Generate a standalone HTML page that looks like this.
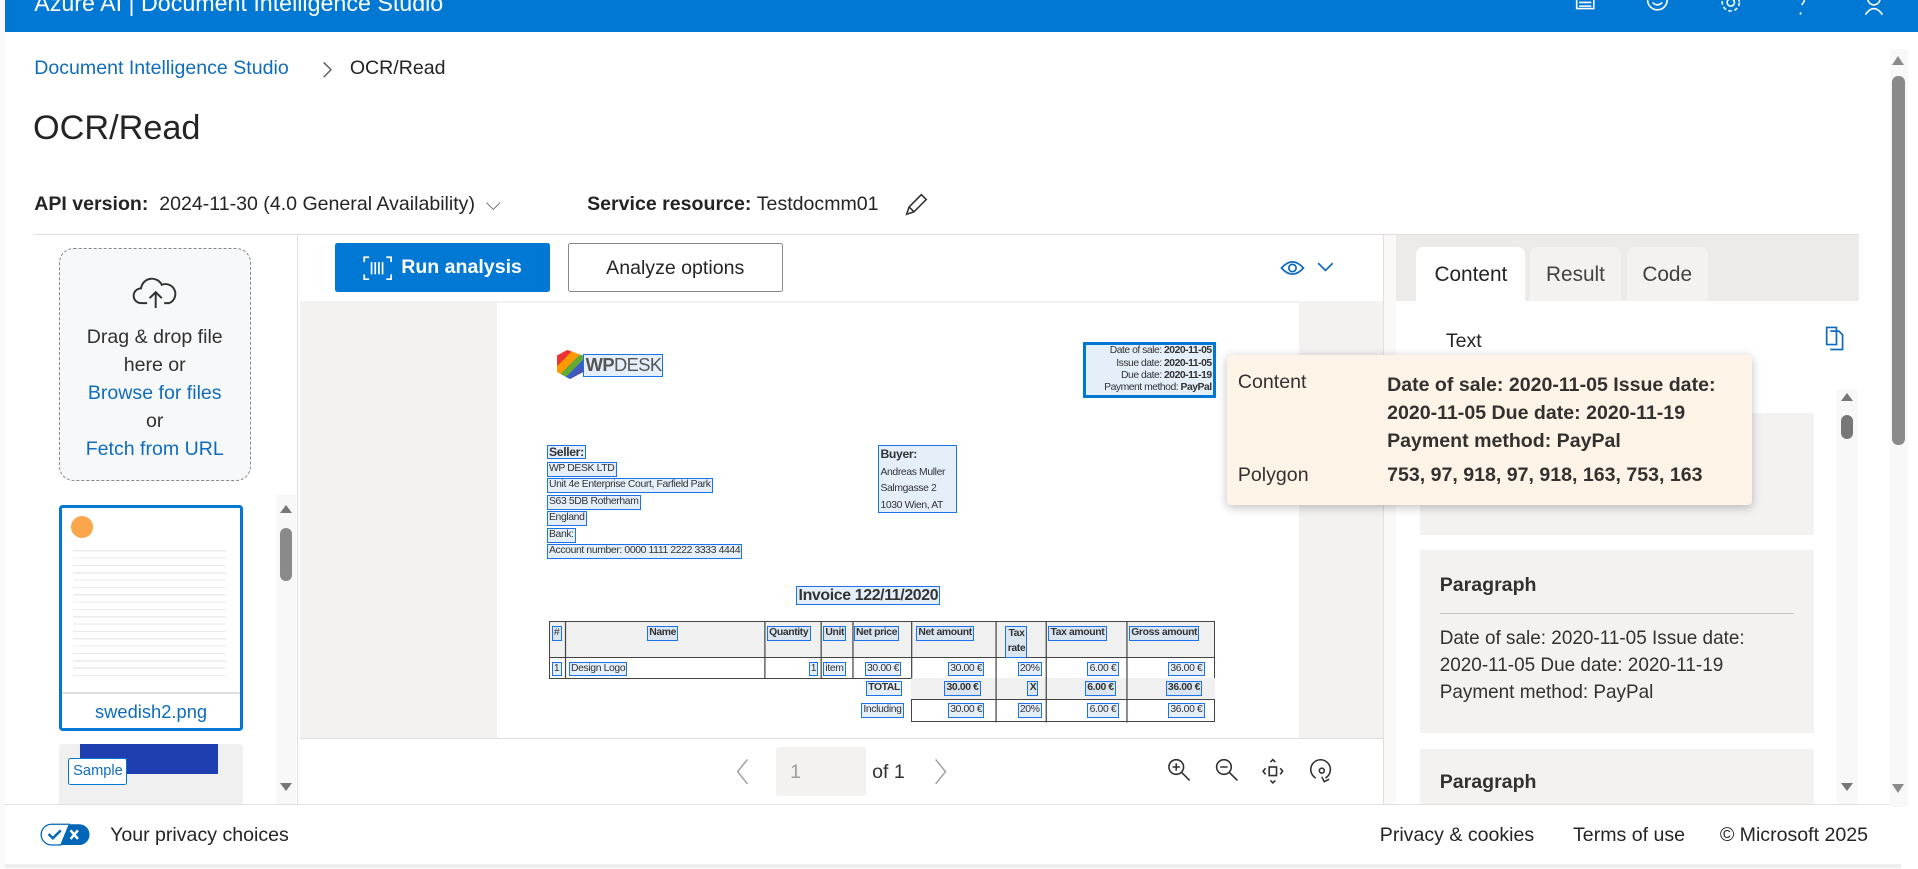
<!DOCTYPE html>
<html><head><meta charset="utf-8">
<style>
*{box-sizing:border-box;margin:0;padding:0}
html,body{width:1918px;height:869px;overflow:hidden;background:#fff}
#w{position:relative;width:1568px;height:710px;zoom:1.2232;font-family:"Liberation Sans",sans-serif;color:#323130;overflow:hidden}
.a{position:absolute;white-space:nowrap}
.ib{position:absolute;white-space:nowrap;border:1.5px solid #1a73e8;background:rgba(180,210,240,.35);font-family:"Liberation Sans Narrow","Liberation Sans",sans-serif;font-size:8.5px;letter-spacing:-0.3px;line-height:10px;color:#333;padding:0 1px}
</style></head><body><div id="w">
<div class="a" style="left:0;top:0;width:1568px;height:26px;background:#0078d4"></div>
<div class="a" style="left:0;top:0;width:4px;height:710px;background:#fafafa"></div>
<div class="a" style="left:28px;top:-8px;color:#fff;font-size:19px">Azure AI | Document Intelligence Studio</div>
<svg class="a" style="left:1286px;top:0" width="260" height="14" fill="none" stroke="#fff" stroke-width="1.3">
<rect x="3" y="-2" width="14" height="9"/><path d="M5 2h10M5 5h10"/>
<circle cx="69" cy="0" r="8"/><path d="M65 2q4 4 8 0"/>
<circle cx="129" cy="2" r="3"/><circle cx="129" cy="2" r="7" stroke-dasharray="3 2"/>
<path d="M186 -4q4 0 3 5l-2 3M186 10v2"/>
<circle cx="246" cy="-1" r="5"/><path d="M239 12q7-10 14 0"/>
</svg>
<div class="a" style="left:1545px;top:40px;width:15px;height:620px;background:#f8f8f8"></div>
<div class="a" style="left:1547px;top:62px;width:10px;height:302px;background:#8a8a8a;border-radius:5px"></div>
<div class="a" style="left:1547px;top:46px;width:0;height:0;border:5px solid transparent;border-bottom:8px solid #8a8a8a;border-top:0"></div>
<div class="a" style="left:1547px;top:641px;width:0;height:0;border:5px solid transparent;border-top:8px solid #8a8a8a;border-bottom:0"></div>
<div class="a" style="left:28px;top:47px;font-size:16px;color:#0f6cbd">Document Intelligence Studio</div>
<svg class="a" style="left:262px;top:49px" width="12" height="16" fill="none" stroke="#605e5c" stroke-width="1.2"><path d="M3 2l6 6-6 6"/></svg>
<div class="a" style="left:286px;top:47px;font-size:16px;color:#242424">OCR/Read</div>
<div class="a" style="left:27px;top:89px;font-size:28px;color:#242424">OCR/Read</div>
<div class="a" style="left:28px;top:158px;font-size:16px;color:#242424"><b>API version:</b>&nbsp; 2024-11-30 (4.0 General Availability) <span style="color:#605e5c">&nbsp;⌵</span></div>
<div class="a" style="left:480px;top:158px;font-size:16px;color:#242424"><b>Service resource:</b>&nbsp;Testdocmm01</div>
<svg class="a" style="left:738px;top:156px" width="22" height="22" fill="none" stroke="#333" stroke-width="1.3"><path d="M3 19l2-6 10-10 4 4-10 10zM5 13l4 4"/></svg>
<div class="a" style="left:28px;top:191px;width:1492px;height:1px;background:#e1dfdd"></div>
<div class="a" style="left:48px;top:203px;width:157px;height:190px;border:1px dashed #8a8886;border-radius:12px;background:#f7f8f9"></div>
<svg class="a" style="left:106px;top:225px" width="42" height="30" fill="none" stroke="#323130" stroke-width="1.6"><path d="M14 23H9a6 6 0 0 1 0-12 9 9 0 0 1 17-3 7 7 0 0 1 6 15h-4M21 27V14M16 19l5-5 5 5"/></svg>
<div class="a" style="left:48px;top:264px;width:157px;text-align:center;font-size:16px;line-height:23px;color:#323130;white-space:normal">Drag &amp; drop file<br>here or<br><span style="color:#0f6cbd">Browse for files</span><br>or<br><span style="color:#0f6cbd">Fetch from URL</span></div>
<div class="a" style="left:48px;top:413px;width:151px;height:185px;border:3px solid #0078d4;border-radius:3px;background:#fff"></div>
<div class="a" style="left:58px;top:422px;width:18px;height:18px;border-radius:50%;background:#fba64a"></div>
<div class="a" style="left:60px;top:445px;width:125px;height:110px;background:repeating-linear-gradient(#fff 0 5px,#e6e6e6 5px 6px);opacity:.8"></div>
<div class="a" style="left:51px;top:566px;width:145px;height:1px;background:#e1dfdd"></div>
<div class="a" style="left:48px;top:573px;width:151px;text-align:center;font-size:15px;color:#0f6cbd">swedish2.png</div>
<div class="a" style="left:48px;top:608px;width:151px;height:50px;background:#f0f0f0;border-radius:3px"></div>
<div class="a" style="left:65px;top:608px;width:113px;height:25px;background:#1f3fb0"></div>
<div class="a" style="left:56px;top:620px;width:48px;height:22px;border:1px solid #0078d4;background:#fff;border-radius:2px;font-size:12px;color:#0f6cbd;padding:3px 3px">Sample</div>
<div class="a" style="left:226px;top:405px;width:16px;height:252px;background:#f8f8f8"></div>
<div class="a" style="left:229px;top:432px;width:10px;height:43px;background:#8a8a8a;border-radius:5px"></div>
<div class="a" style="left:229px;top:413px;border:5px solid transparent;border-bottom:7px solid #777;border-top:0"></div>
<div class="a" style="left:229px;top:640px;border:5px solid transparent;border-top:7px solid #777;border-bottom:0"></div>
<div class="a" style="left:243px;top:192px;width:1px;height:466px;background:#e1dfdd"></div>
<div class="a" style="left:274px;top:199px;width:176px;height:40px;background:#0078d4;border-radius:2px;color:#fff;font-size:16px;font-weight:bold;padding:10px 0 0 54px">Run analysis</div>
<svg class="a" style="left:297px;top:209px" width="24" height="20" fill="none" stroke="#fff" stroke-width="1.4"><path d="M1 5V1h4M19 1h4v4M23 15v4h-4M5 19H1v-4M7 5v10M10 5v10M13 5v10M16 5v10"/></svg>
<div class="a" style="left:464px;top:199px;width:176px;height:40px;border:1px solid #8a8886;border-radius:2px;font-size:16px;text-align:center;padding-top:10px;color:#242424">Analyze options</div>
<svg class="a" style="left:1046px;top:210px" width="50" height="18" fill="none" stroke="#0f6cbd" stroke-width="1.4"><path d="M2 9q9-10 18 0q-9 10-18 0z"/><circle cx="11" cy="9" r="3"/><path d="M32 5l6 6 6-6"/></svg>
<div class="a" style="left:245px;top:246px;width:886px;height:358px;background:#f3f2f1"></div>
<div class="a" style="left:406px;top:248px;width:656px;height:356px;background:#fff"></div>
<div class="a" style="left:455px;top:286px;width:22px;height:24px;background:linear-gradient(135deg,#e33 0,#e33 30%,#f90 30%,#f90 50%,#6a3 50%,#6a3 65%,#36c 65%,#639 100%);clip-path:polygon(0 20%,40% 0,100% 20%,100% 75%,50% 100%,0 75%)"></div>
<div class="ib" style="left:477px;top:289px;width:65px;height:19px;font-family:'Liberation Sans',sans-serif;font-size:15px;line-height:16px;font-weight:bold;color:#555;letter-spacing:-0.5px">WP<span style="font-weight:normal">DESK</span></div>
<div class="ib" style="left:885px;top:280px;width:109px;height:45px;border:2.5px solid #0078d4;text-align:right;font-size:8.5px;line-height:10px;padding:0 1px;letter-spacing:-0.4px">Date of sale: <b>2020-11-05</b><br>Issue date: <b>2020-11-05</b><br>Due date: <b>2020-11-19</b><br>Payment method: <b>PayPal</b></div>
<div class="ib" style="left:447px;top:364px;font-weight:bold;font-size:10px">Seller:</div>
<div class="ib" style="left:447px;top:378px">WP DESK LTD</div>
<div class="ib" style="left:447px;top:391px">Unit 4e Enterprise Court, Farfield Park</div>
<div class="ib" style="left:447px;top:405px">S63 5DB Rotherham</div>
<div class="ib" style="left:447px;top:418px">England</div>
<div class="ib" style="left:447px;top:432px">Bank:</div>
<div class="ib" style="left:447px;top:445px">Account number: 0000 1111 2222 3333 4444</div>
<div class="ib" style="left:718px;top:364px;width:64px;height:55px;line-height:13.5px"><b style="font-size:10px">Buyer:</b><br>Andreas Muller<br>Salmgasse 2<br>1030 Wien, AT</div>
<div class="ib" style="left:651px;top:479px;font-size:13px;line-height:14px;font-weight:bold">Invoice 122/11/2020</div>
<div class="a" style="left:449px;top:508px;width:544px;height:30px;background:#f0f0f0;border:1px solid #444"></div>
<div class="a" style="left:449px;top:537px;width:544px;height:18px;border:1px solid #444"></div>
<div class="a" style="left:745px;top:554px;width:248px;height:36px;border:1px solid #444"></div>
<div class="a" style="left:745px;top:554px;width:248px;height:18px;background:#f0f0f0;border-bottom:1px solid #444"></div>
<svg class="a" style="left:449px;top:508px" width="544" height="83" stroke="#444" stroke-width="1"><path d="M13.5 0v47M176.5 0v47M222.5 0v47M248.5 0v47M296.5 0v47M365.5 0v83M406.5 0v83M472.5 0v83"/></svg>
<div class="ib" style="left:451px;top:512px">#</div>
<div class="ib" style="left:529px;top:512px;font-weight:bold">Name</div>
<div class="ib" style="left:627px;top:512px;font-weight:bold">Quantity</div>
<div class="ib" style="left:673px;top:512px;font-weight:bold">Unit</div>
<div class="ib" style="left:698px;top:512px;font-weight:bold">Net price</div>
<div class="ib" style="left:749px;top:512px;font-weight:bold">Net amount</div>
<div class="ib" style="left:822px;top:512px;font-weight:bold;text-align:center;line-height:12px">Tax<br>rate</div>
<div class="ib" style="left:857px;top:512px;font-weight:bold">Tax amount</div>
<div class="ib" style="left:923px;top:512px;font-weight:bold">Gross amount</div>
<div class="ib" style="left:451px;top:541px">1</div>
<div class="ib" style="left:465px;top:541px">Design Logo</div>
<div class="ib" style="left:661px;top:541px">1</div>
<div class="ib" style="left:673px;top:541px">item</div>
<div class="ib" style="left:707px;top:541px">30.00 €</div>
<div class="ib" style="left:775px;top:541px">30.00 €</div>
<div class="ib" style="left:832px;top:541px">20%</div>
<div class="ib" style="left:889px;top:541px">6.00 €</div>
<div class="ib" style="left:955px;top:541px">36.00 €</div>
<div class="ib" style="left:708px;top:557px;font-weight:bold">TOTAL</div>
<div class="ib" style="left:772px;top:557px;font-weight:bold">30.00 €</div>
<div class="ib" style="left:840px;top:557px;font-weight:bold">X</div>
<div class="ib" style="left:887px;top:557px;font-weight:bold">6.00 €</div>
<div class="ib" style="left:953px;top:557px;font-weight:bold">36.00 €</div>
<div class="ib" style="left:704px;top:575px">Including</div>
<div class="ib" style="left:775px;top:575px">30.00 €</div>
<div class="ib" style="left:832px;top:575px">20%</div>
<div class="ib" style="left:889px;top:575px">6.00 €</div>
<div class="ib" style="left:955px;top:575px">36.00 €</div>
<div class="a" style="left:245px;top:603px;width:886px;height:1px;background:#e1dfdd"></div>
<svg class="a" style="left:600px;top:619px" width="14" height="24" fill="none" stroke="#a19f9d" stroke-width="1.2"><path d="M11 2L3 12l8 10"/></svg>
<div class="a" style="left:634px;top:611px;width:74px;height:40px;background:#f3f2f1;border-radius:2px;font-size:16px;color:#a19f9d;padding:11px 12px">1</div>
<div class="a" style="left:713px;top:622px;font-size:16px;color:#323130">of 1</div>
<svg class="a" style="left:762px;top:619px" width="14" height="24" fill="none" stroke="#a19f9d" stroke-width="1.2"><path d="M3 2l8 10-8 10"/></svg>
<svg class="a" style="left:952px;top:618px" width="145" height="26" fill="none" stroke="#323130" stroke-width="1.3">
<circle cx="10" cy="9" r="6"/><path d="M14 13l7 7M7 9h6M10 6v6"/>
<circle cx="49" cy="9" r="6"/><path d="M53 13l7 7M46 9h6"/>
<rect x="86" y="9" width="6" height="7"/><path d="M87 5l2-2 2 2M87 20l2 2 2-2M83 10l-2 2.5 2 2.5M95 10l2 2.5-2 2.5"/>
<path d="M124 18a8 8 0 1 1 8 0M129 17l2 4 4-2"/><circle cx="129" cy="12" r="2"/>
</svg>
<div class="a" style="left:1131px;top:192px;width:10px;height:466px;background:#faf9f8;border-left:1px solid #e1dfdd"></div>
<div class="a" style="left:1141px;top:192px;width:379px;height:54px;background:#edebe9"></div>
<div class="a" style="left:1158px;top:202px;width:89px;height:44px;background:#fff;border-radius:6px 6px 0 0;font-size:17px;color:#242424;text-align:center;padding-top:13px">Content</div>
<div class="a" style="left:1251px;top:202px;width:74px;height:44px;background:#f3f2f1;border-radius:6px 6px 0 0;font-size:17px;color:#424242;text-align:center;padding-top:13px">Result</div>
<div class="a" style="left:1330px;top:202px;width:66px;height:44px;background:#f3f2f1;border-radius:6px 6px 0 0;font-size:17px;color:#424242;text-align:center;padding-top:13px">Code</div>
<div class="a" style="left:1182px;top:270px;font-size:16px;color:#242424">Text</div>
<svg class="a" style="left:1490px;top:266px" width="20" height="22" fill="none" stroke="#0f6cbd" stroke-width="1.4"><path d="M3 2h8v14H3zM6 5h7l3 3v12H6"/></svg>
<div class="a" style="left:1161px;top:338px;width:322px;height:99px;background:#f3f2f1"></div>
<div class="a" style="left:1161px;top:450px;width:322px;height:149px;background:#f3f2f1"></div>
<div class="a" style="left:1177px;top:469px;font-size:16px;font-weight:bold;color:#323130">Paragraph</div>
<div class="a" style="left:1177px;top:501px;width:290px;height:1px;background:#c8c6c4"></div>
<div class="a" style="left:1177px;top:512px;font-size:15.5px;line-height:22px;color:#323130">Date of sale: 2020-11-05 Issue date:<br>2020-11-05 Due date: 2020-11-19<br>Payment method: PayPal</div>
<div class="a" style="left:1161px;top:612px;width:322px;height:46px;background:#f3f2f1"></div>
<div class="a" style="left:1177px;top:630px;font-size:16px;font-weight:bold;color:#323130">Paragraph</div>
<div class="a" style="left:1502px;top:318px;width:16px;height:340px;background:#f8f8f8"></div>
<div class="a" style="left:1505px;top:339px;width:10px;height:20px;background:#777;border-radius:5px"></div>
<div class="a" style="left:1505px;top:321px;border:5px solid transparent;border-bottom:7px solid #777;border-top:0"></div>
<div class="a" style="left:1505px;top:640px;border:5px solid transparent;border-top:7px solid #777;border-bottom:0"></div>
<div class="a" style="left:1003px;top:290px;width:429px;height:123px;background:#fdf3e7;border-radius:3px;box-shadow:0 2px 8px rgba(0,0,0,.25)"></div>
<div class="a" style="left:1012px;top:303px;font-size:16px;color:#323130">Content</div>
<div class="a" style="left:1134px;top:303px;font-size:16px;line-height:23px;font-weight:bold;color:#323130">Date of sale: 2020-11-05 Issue date:<br>2020-11-05 Due date: 2020-11-19<br>Payment method: PayPal</div>
<div class="a" style="left:1012px;top:379px;font-size:16px;color:#323130">Polygon</div>
<div class="a" style="left:1134px;top:379px;font-size:16px;font-weight:bold;color:#323130">753, 97, 918, 97, 918, 163, 753, 163</div>
<div class="a" style="left:4px;top:657px;width:1540px;height:1px;background:#e1dfdd"></div>
<div class="a" style="left:4px;top:706px;width:1550px;height:4px;background:#eee"></div>
<svg class="a" style="left:33px;top:673px" width="42" height="20"><rect x="0.5" y="1" width="40" height="17" rx="8.5" fill="#0067b8"/><path d="M1 9.5a8.5 8.5 0 0 1 8.5-8.5H24L17 18H9.5A8.5 8.5 0 0 1 1 9.5z" fill="#fff" stroke="#0067b8"/><path d="M7 9l3.5 3.5L17 6" stroke="#0067b8" stroke-width="2" fill="none"/><path d="M25 6l6 7M31 6l-6 7" stroke="#fff" stroke-width="2"/></svg>
<div class="a" style="left:90px;top:674px;font-size:16px;color:#242424">Your privacy choices</div>
<div class="a" style="left:1128px;top:674px;font-size:16px;color:#242424">Privacy &amp; cookies</div>
<div class="a" style="left:1286px;top:674px;font-size:16px;color:#242424">Terms of use</div>
<div class="a" style="left:1406px;top:674px;font-size:16px;color:#242424">© Microsoft 2025</div>
</div></body></html>
